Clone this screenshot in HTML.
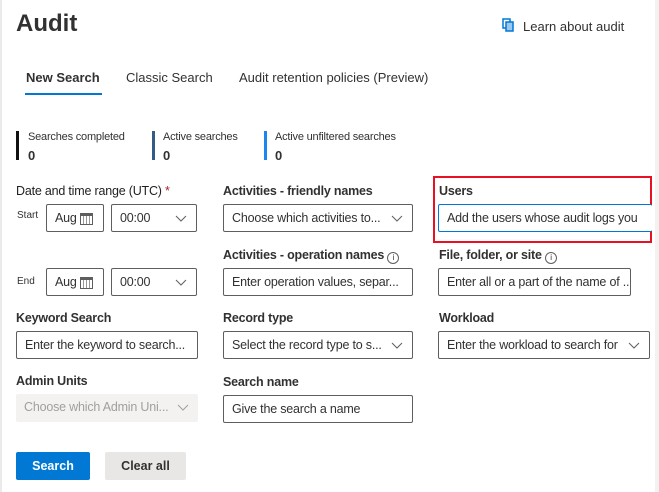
<!DOCTYPE html>
<html><head><meta charset="utf-8"><style>
*{box-sizing:border-box;margin:0;padding:0}
body{width:659px;height:492px;position:relative;background:#fff;font-family:"Liberation Sans",sans-serif;color:#323130;overflow:hidden}
.a{position:absolute;white-space:nowrap}
.lbl{font-size:12.5px;font-weight:bold;color:#323130;letter-spacing:-0.2px}
.box{position:absolute;height:28px;border:1px solid #605e5c;border-radius:2px;background:#fff;font-size:12.5px;color:#605e5c;padding-left:8px;line-height:27px;white-space:nowrap;overflow:hidden;letter-spacing:-0.2px}
.chev{position:absolute;right:9px;top:10px;width:12px;height:7px}
.small{font-size:11px;color:#323130;letter-spacing:-0.2px}
</style></head><body>
<div class="a" style="left:0;top:0;width:2px;height:492px;background:#edebe9"></div>
<div class="a" style="left:655px;top:0;width:4px;height:492px;background:#f3f2f1"></div>

<div class="a" style="left:16px;top:10px;font-size:24px;font-weight:bold;color:#323130">Audit</div>
<svg class="a" style="left:502px;top:18px" width="13" height="14" viewBox="0 0 13 14"><rect x="1" y="1" width="7" height="9" fill="#fff" stroke="#0078d4" stroke-width="1.5"/><rect x="4" y="4" width="7" height="9" fill="#9cc8f0" stroke="#0078d4" stroke-width="1.5"/></svg>
<div class="a" style="left:523px;top:19px;font-size:13px;color:#323130">Learn about audit</div>

<div class="a" style="left:26px;top:70px;font-size:13px;font-weight:bold;color:#323130">New Search</div>
<div class="a" style="left:25px;top:93px;width:77px;height:2px;background:#0078d4"></div>
<div class="a" style="left:126px;top:70px;font-size:13px;color:#323130">Classic Search</div>
<div class="a" style="left:239px;top:70px;font-size:13px;color:#323130">Audit retention policies (Preview)</div>

<div class="a" style="left:16px;top:131px;width:3px;height:29px;background:#111"></div>
<div class="a small" style="left:28px;top:131px">Searches completed</div>
<div class="a" style="left:28px;top:148px;font-size:13px;font-weight:bold">0</div>
<div class="a" style="left:152px;top:131px;width:3px;height:29px;background:#335b85"></div>
<div class="a small" style="left:163px;top:131px">Active searches</div>
<div class="a" style="left:163px;top:148px;font-size:13px;font-weight:bold">0</div>
<div class="a" style="left:264px;top:131px;width:3px;height:29px;background:#1a86ee"></div>
<div class="a small" style="left:275px;top:131px">Active unfiltered searches</div>
<div class="a" style="left:275px;top:148px;font-size:13px;font-weight:bold">0</div>

<div class="a lbl" style="left:16px;top:184px;font-weight:normal;color:#201f1e">Date and time range (UTC) <span style="color:#a4262c">*</span></div>
<div class="a" style="left:17px;top:210px;font-size:10px">Start</div>
<div class="box" style="left:46px;top:204px;width:58px;color:#323130">Aug<span style="position:absolute;left:33px;top:8px;width:13px;height:12px;border:1px solid #605e5c;border-top-width:3px;background:repeating-linear-gradient(90deg,#fff 0 2px,#999 2px 3px)"></span></div>
<div class="box" style="left:111px;top:204px;width:86px;color:#323130">00:00<svg class="chev" viewBox="0 0 12 7"><path d="M1 1l5 5 5-5" fill="none" stroke="#605e5c"/></svg></div>
<div class="a" style="left:17px;top:276px;font-size:10px">End</div>
<div class="box" style="left:46px;top:268px;width:58px;color:#323130">Aug<span style="position:absolute;left:33px;top:8px;width:13px;height:12px;border:1px solid #605e5c;border-top-width:3px;background:repeating-linear-gradient(90deg,#fff 0 2px,#999 2px 3px)"></span></div>
<div class="box" style="left:111px;top:268px;width:86px;color:#323130">00:00<svg class="chev" viewBox="0 0 12 7"><path d="M1 1l5 5 5-5" fill="none" stroke="#605e5c"/></svg></div>

<div class="a lbl" style="left:223px;top:184px">Activities - friendly names</div>
<div class="box" style="left:223px;top:204px;width:190px;color:#323130">Choose which activities to...<svg class="chev" viewBox="0 0 12 7"><path d="M1 1l5 5 5-5" fill="none" stroke="#605e5c"/></svg></div>
<div class="a lbl" style="left:223px;top:248px">Activities - operation names <span style="display:inline-block;width:12px;height:12px;border:1px solid #605e5c;border-radius:50%;font-size:8px;text-align:center;line-height:10px;font-weight:normal;vertical-align:-1px">i</span></div>
<div class="box" style="left:223px;top:268px;width:190px;color:#323130">Enter operation values, separ...</div>

<div class="a" style="left:433px;top:176px;width:219px;height:67px;border:2px solid #e81123"></div>
<div class="a lbl" style="left:439px;top:184px">Users</div>
<div class="box" style="left:438px;top:204px;width:214px;border-color:#0078d4;border-right:none;color:#323130">Add the users whose audit logs you</div>
<div class="a lbl" style="left:439px;top:248px">File, folder, or site <span style="display:inline-block;width:12px;height:12px;border:1px solid #605e5c;border-radius:50%;font-size:8px;text-align:center;line-height:10px;font-weight:normal;vertical-align:-1px">i</span></div>
<div class="box" style="left:438px;top:268px;width:193px;color:#323130">Enter all or a part of the name of ...</div>

<div class="a lbl" style="left:16px;top:311px">Keyword Search</div>
<div class="box" style="left:16px;top:331px;width:182px;color:#323130">Enter the keyword to search...</div>
<div class="a lbl" style="left:223px;top:311px">Record type</div>
<div class="box" style="left:223px;top:331px;width:190px;color:#323130">Select the record type to s...<svg class="chev" viewBox="0 0 12 7"><path d="M1 1l5 5 5-5" fill="none" stroke="#605e5c"/></svg></div>
<div class="a lbl" style="left:439px;top:311px">Workload</div>
<div class="box" style="left:438px;top:331px;width:212px;color:#323130">Enter the workload to search for<svg class="chev" viewBox="0 0 12 7"><path d="M1 1l5 5 5-5" fill="none" stroke="#605e5c"/></svg></div>

<div class="a lbl" style="left:16px;top:374px">Admin Units</div>
<div class="box" style="left:16px;top:394px;width:182px;border:none;background:#f3f2f1;color:#a19f9d">Choose which Admin Uni...<svg class="chev" viewBox="0 0 12 7"><path d="M1 1l5 5 5-5" fill="none" stroke="#a19f9d"/></svg></div>
<div class="a lbl" style="left:223px;top:375px">Search name</div>
<div class="box" style="left:223px;top:395px;width:190px;color:#323130">Give the search a name</div>

<div class="a" style="left:16px;top:452px;width:74px;height:28px;background:#0078d4;border-radius:2px;color:#fff;font-size:12.5px;font-weight:bold;text-align:center;line-height:28px">Search</div>
<div class="a" style="left:105px;top:452px;width:81px;height:28px;background:#e8e7e6;border-radius:2px;color:#323130;font-size:12.5px;font-weight:bold;text-align:center;line-height:28px">Clear all</div>
</body></html>
